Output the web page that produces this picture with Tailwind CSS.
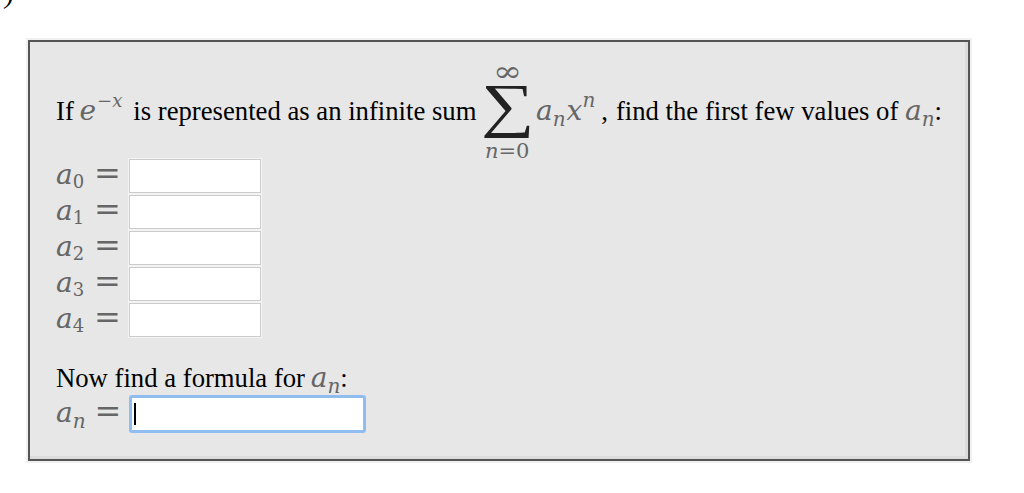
<!DOCTYPE html>
<html lang="en">
<head>
  <meta charset="UTF-8">
  <title>Series question</title>
  <script src="https://cdn.jsdelivr.net/npm/@tailwindcss/browser@4"></script>
</head>
<body class="bg-white h-[493px] overflow-hidden font-['Liberation_Serif',serif] text-[26.7px] text-black">
  <div class="h-[38px] overflow-hidden pl-[5px]">
    <div class="-mt-[21px] leading-[30px] italic">)</div>
  </div>

  <div class="ml-[26px] w-[946px] h-[425px] border-2 border-[#f0f0f0]">
    <div class="h-full border-2 border-[#555] bg-[#e7e7e7] shadow-[inset_-3px_-3px_0_#dcdcdc] px-[26px]">

      <div class="flex items-center h-[116px] pt-[22px] whitespace-pre">
        <span>If </span>
        <span class="font-['DejaVu_Serif',serif] italic text-[#666] text-[28px] -ml-[1px]">e<sup class="text-[18px] relative -top-[13px] align-baseline ml-[1px]"><span class="not-italic">−</span>x</sup></span>
        <span class="ml-[11px]">is represented as an infinite sum</span>
        <span class="inline-flex flex-col items-center w-[50px] ml-[6px]">
          <span class="font-['DejaVu_Serif',serif] text-[28px] leading-[18px] text-[#666] scale-x-125 -translate-y-[1px]">∞</span>
          <span class="text-[60px] leading-[56px] text-[#222] scale-x-125 -translate-y-[5px]">∑</span>
          <span class="font-['DejaVu_Serif',serif] text-[21px] leading-[20px] text-[#666] translate-y-[3px]"><i>n</i>=0</span>
        </span>
        <span class="font-['DejaVu_Serif',serif] italic text-[#666] text-[28px] ml-[4px]">a<sub class="text-[20px] relative top-[6px] align-baseline">n</sub><span class="ml-[1px]">x</span><sup class="text-[20px] relative -top-[13px] align-baseline">n</sup></span>
        <span class="ml-[6px]">,</span>
        <span class="ml-[8px]">find the first few values of </span>
        <span class="font-['DejaVu_Serif',serif] italic text-[#666] text-[28px]">a<sub class="text-[20px] relative top-[6px] align-baseline">n</sub></span>
        <span>:</span>
      </div>

      <div class="flex flex-col">
        <div class="flex items-center h-[36px]">
          <span class="w-[73px] font-['DejaVu_Serif',serif] text-[#666] text-[28px] whitespace-pre -translate-y-[3px]"><i>a</i><sub class="text-[18px] relative top-[4px] align-baseline">0</sub> <span class="text-[32px] ml-[1px]">=</span></span>
          <input class="w-[132px] h-[34px] bg-white border border-[#ccc] outline outline-1 outline-[#f4f4f4]">
        </div>
        <div class="flex items-center h-[36px]">
          <span class="w-[73px] font-['DejaVu_Serif',serif] text-[#666] text-[28px] whitespace-pre -translate-y-[3px]"><i>a</i><sub class="text-[18px] relative top-[4px] align-baseline">1</sub> <span class="text-[32px] ml-[1px]">=</span></span>
          <input class="w-[132px] h-[34px] bg-white border border-[#ccc] outline outline-1 outline-[#f4f4f4]">
        </div>
        <div class="flex items-center h-[36px]">
          <span class="w-[73px] font-['DejaVu_Serif',serif] text-[#666] text-[28px] whitespace-pre -translate-y-[3px]"><i>a</i><sub class="text-[18px] relative top-[4px] align-baseline">2</sub> <span class="text-[32px] ml-[1px]">=</span></span>
          <input class="w-[132px] h-[34px] bg-white border border-[#ccc] outline outline-1 outline-[#f4f4f4]">
        </div>
        <div class="flex items-center h-[36px]">
          <span class="w-[73px] font-['DejaVu_Serif',serif] text-[#666] text-[28px] whitespace-pre -translate-y-[3px]"><i>a</i><sub class="text-[18px] relative top-[4px] align-baseline">3</sub> <span class="text-[32px] ml-[1px]">=</span></span>
          <input class="w-[132px] h-[34px] bg-white border border-[#ccc] outline outline-1 outline-[#f4f4f4]">
        </div>
        <div class="flex items-center h-[36px]">
          <span class="w-[73px] font-['DejaVu_Serif',serif] text-[#666] text-[28px] whitespace-pre -translate-y-[3px]"><i>a</i><sub class="text-[18px] relative top-[4px] align-baseline">4</sub> <span class="text-[32px] ml-[1px]">=</span></span>
          <input class="w-[132px] h-[34px] bg-white border border-[#ccc] outline outline-1 outline-[#f4f4f4]">
        </div>
      </div>

      <div class="mt-[23px] h-[34px] leading-[34px] whitespace-pre">Now find a formula for <span class="font-['DejaVu_Serif',serif] italic text-[#666] text-[28px] -ml-[1px]">a<sub class="text-[20px] relative top-[6px] align-baseline">n</sub></span>:</div>

      <div class="flex items-center h-[38px]">
        <span class="w-[73px] font-['DejaVu_Serif',serif] text-[#666] text-[28px] whitespace-pre -translate-y-[3px]"><i>a</i><sub class="text-[20px] italic relative top-[6px] align-baseline">n</sub><span class="text-[32px] ml-[9px]">=</span></span>
        <div class="w-[237px] h-[38px] bg-white border-[3px] border-[#8fbdf0] rounded-[3px] flex items-center pl-[2px]">
          <span class="w-[2px] h-[22px] bg-black"></span>
        </div>
      </div>

    </div>
  </div>
</body>
</html>
